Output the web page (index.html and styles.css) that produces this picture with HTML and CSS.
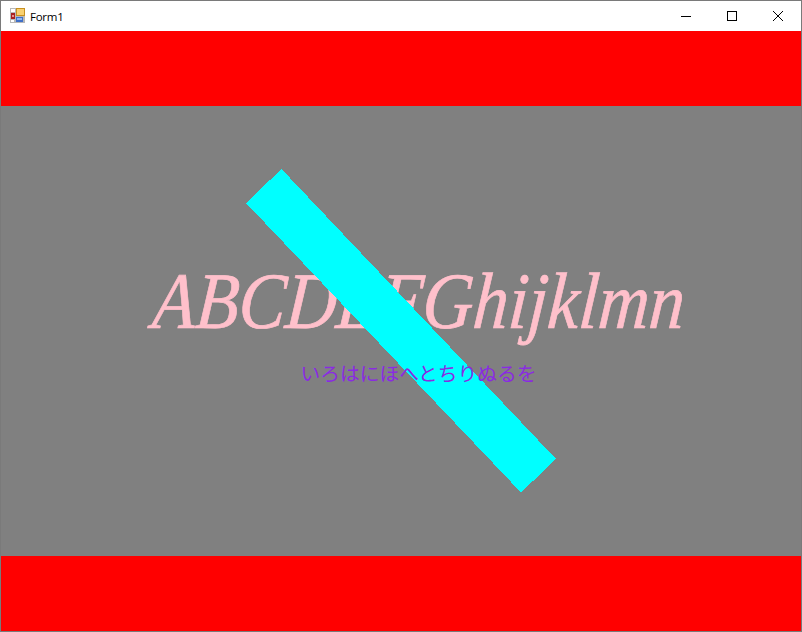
FILE: index.html
```html
<!DOCTYPE html>
<html lang="en">
    <head>
        <meta charset="UTF-8" />
        <title>Form1</title>
        <link rel="stylesheet" href="styles.css">
    </head>
    <body>
        <div class="window">
            <div class="titlebar">
                <svg class="app-icon" width="16" height="16" viewBox="0 0 16 16" shape-rendering="crispEdges">
                    <rect x="0" y="0" width="15" height="15" fill="#b8b8b8" />
                    <rect x="1" y="1" width="4" height="3" fill="#fff" />
                    <rect x="1" y="12" width="3" height="2" fill="#fff" />
                    <rect x="6" y="0" width="9" height="8" fill="#c89020" />
                    <rect x="7" y="1" width="7" height="6" fill="#f8d070" />
                    <rect x="1" y="5" width="4" height="6" fill="#a82020" />
                    <rect x="2" y="7" width="2" height="2" fill="#e89090" />
                    <rect x="6" y="9" width="7" height="5" fill="#3f6fc8" />
                    <rect x="7" y="10" width="5" height="2" fill="#90b8f0" />
                </svg>
                <span class="title">Form1</span>
                <div class="caption-buttons">
                    <svg class="caption-btn" width="46" height="30" viewBox="0 0 46 30">
                        <path d="M18 15.5h10" stroke="#000" fill="none" />
                    </svg>
                    <svg class="caption-btn" width="46" height="30" viewBox="0 0 46 30">
                        <rect x="18.5" y="10.5" width="9" height="9" stroke="#000" fill="none" />
                    </svg>
                    <svg class="caption-btn" width="46" height="30" viewBox="0 0 46 30">
                        <path d="M18 10l10 10M28 10l-10 10" stroke="#000" fill="none" />
                    </svg>
                </div>
            </div>
            <div class="band"></div>
            <div class="canvas">
                <div class="big-text">ABCDEFGhijklmn</div>
                <!-- the bar is painted over the big text, under the kana -->
                <svg class="bar" width="800" height="450" viewBox="0 0 800 450" shape-rendering="crispEdges">
                    <polygon points="280.5,63 245,97 520,386.5 555,353" fill="#00ffff" />
                </svg>
                <div class="kana">いろはにほへとちりぬるを</div>
            </div>
            <div class="band"></div>
        </div>
    </body>
</html>
```

FILE: styles.css
```css
* {
    margin: 0;
    padding: 0;
    box-sizing: border-box;
}
body {
    width: 802px;
    height: 632px;
    overflow: hidden;
    background-color: #fff;
}
.window {
    width: 802px;
    height: 632px;
    border: 1px solid #7a7a7a;
    display: flex;
    flex-direction: column;
}
.titlebar {
    height: 30px;
    display: flex;
    align-items: center;
    padding-left: 9px;
    background-color: #fff;
}
.app-icon {
    flex: none;
}
.title {
    margin-left: 4px;
    font-family: "Open Sans", "Noto Sans", sans-serif;
    font-size: 11.5px;
    letter-spacing: -0.25px;
    color: #000;
}
.caption-buttons {
    margin-left: auto;
    display: flex;
}
.caption-btn {
    display: block;
}
.band {
    height: 75px;
    background-color: #f00;
}
.canvas {
    position: relative;
    height: 450px;
    background-color: #808080;
    display: flex;
    flex-direction: column;
    align-items: center;
}
.big-text {
    margin-top: 150px;
    margin-left: 36px;
    font-family: "Liberation Serif", serif;
    font-style: italic;
    font-size: 80px;
    line-height: 90px;
    color: #ffc0cb;
    white-space: nowrap;
    -webkit-text-stroke: 0.7px #ffc0cb;
    transform: scaleX(0.88) skewX(-5deg);
}
.bar {
    position: absolute;
    left: 0;
    top: 0;
}
.kana {
    position: relative;
    margin-top: 12px;
    margin-left: 35px;
    font-family: "Noto Sans CJK JP", sans-serif;
    font-size: 19.75px;
    line-height: 30px;
    color: #8a2be2;
    white-space: nowrap;
}
```
